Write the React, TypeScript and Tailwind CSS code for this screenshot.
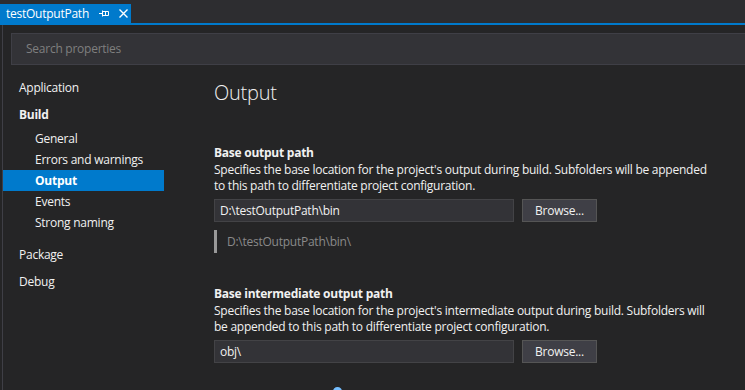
import React from 'react';

const font = { fontFamily: '"Segoe UI", "Open Sans", "Noto Sans", sans-serif' };

function PinIcon() {
  return (
    <svg width="11" height="9" viewBox="0 0 11 9" className="text-white">
      <path d="M0 4.5H3.5M3.5 1.5V7.5M4 2.5H9.5V6.5H4M6.5 2.5V6.5" stroke="currentColor" strokeWidth="1" fill="none" />
    </svg>
  );
}

function CloseIcon() {
  return (
    <svg width="9" height="9" viewBox="0 0 9 9" className="text-white">
      <path d="M0.5 0.5L8.5 8.5M8.5 0.5L0.5 8.5" stroke="currentColor" strokeWidth="1.4" fill="none" />
    </svg>
  );
}

type NavItem = { label: string; sub?: boolean; bold?: boolean; active?: boolean; gap?: string };

const nav: NavItem[] = [
  { label: 'Application', gap: 'mt-0' },
  { label: 'Build', bold: true, gap: 'mt-[6px]' },
  { label: 'General', sub: true, gap: 'mt-[3px]' },
  { label: 'Errors and warnings', sub: true },
  { label: 'Output', sub: true, bold: true, active: true },
  { label: 'Events', sub: true },
  { label: 'Strong naming', sub: true },
  { label: 'Package', gap: 'mt-[11px]' },
  { label: 'Debug', gap: 'mt-[6px]' }
];

function PathField({ value }: { value: string }) {
  return (
    <div className="flex items-center gap-2">
      <div className="w-[300px] h-[23px] bg-[#333337] border border-[#434346] px-[5px] flex items-center text-[12px] text-[#f1f1f1]">
        {value}
      </div>
      <button className="w-[75px] h-[23px] bg-[#3f3f46] border border-[#555555] text-[12px] text-[#f1f1f1] flex items-center justify-center">
        Browse...
      </button>
    </div>
  );
}

function Setting({ title, desc, value, children }: { title: string; desc: string; value: string; children?: React.ReactNode }) {
  return (
    <div className="flex flex-col">
      <h3 className="text-[12px] font-bold text-[#f1f1f1] leading-[16px]">{title}</h3>
      <p className="text-[12px] text-[#f1f1f1] leading-[16px] mt-[1px] w-[495px]">{desc}</p>
      <div className="mt-[5px]">
        <PathField value={value} />
      </div>
      {children}
    </div>
  );
}

export default function App() {
  return (
    <div style={font} className="w-[745px] h-[390px] bg-[#252526] overflow-hidden flex flex-col tracking-[-0.25px]">
      <div className="shrink-0 h-[23px] bg-[#2d2d30] flex items-end">
        <div className="h-[19px] w-[131px] bg-[#007acc] flex items-center pl-[6px] text-white text-[12px]">
          <span>testOutputPath</span>
          <span className="ml-[10px] flex items-center"><PinIcon /></span>
          <span className="ml-[9px] flex items-center"><CloseIcon /></span>
        </div>
      </div>
      <div className="shrink-0 h-[2px] bg-[#007acc]" />
      <div className="flex-1 min-h-0 border-l border-[#3f3f46] ml-[2px] flex flex-col">
        <div className="shrink-0 mt-[8px] ml-[8px] h-[32px] bg-[#333337] border border-[#3f3f46] flex items-center pl-[14px] text-[12px] text-[#7f7f7f] -mr-[4px]">
          Search properties
        </div>
        <div className="flex flex-1 min-h-0">
          <nav className="w-[161px] pt-[12px] flex flex-col">
            {nav.map(item => (
              <div
                key={item.label}
                className={`${item.gap ?? ''} shrink-0 h-[21px] flex items-center text-[12px] ${item.sub ? 'pl-[32px]' : 'pl-[16px]'} ${item.bold ? 'font-bold' : ''} ${item.active ? 'bg-[#007acc] text-white' : 'text-[#f1f1f1]'}`}
              >
                {item.label}
              </div>
            ))}
          </nav>
          <main className="flex-1 pl-[50px] pt-[15px] flex flex-col">
            <h1 className="text-[20px] font-light text-[#f1f1f1] leading-[26px]">Output</h1>
            <div className="mt-[39px]">
              <Setting
                title="Base output path"
                desc="Specifies the base location for the project's output during build. Subfolders will be appended to this path to differentiate project configuration."
                value="D:\testOutputPath\bin"
              >
                <div className="mt-[8px] border-l-[3px] border-[#999999] h-[23px] flex items-center pl-[10px] text-[12px] text-[#8a8a8a]">
                  D:\testOutputPath\bin\
                </div>
              </Setting>
            </div>
            <div className="mt-[33px]">
              <Setting
                title="Base intermediate output path"
                desc="Specifies the base location for the project's intermediate output during build. Subfolders will be appended to this path to differentiate project configuration."
                value="obj\"
              />
            </div>
            <div className="shrink-0 mt-[24px] ml-[119px] w-[9px] h-[9px] rounded-full bg-[#75beff]" />
          </main>
        </div>
      </div>
    </div>
  );
}
